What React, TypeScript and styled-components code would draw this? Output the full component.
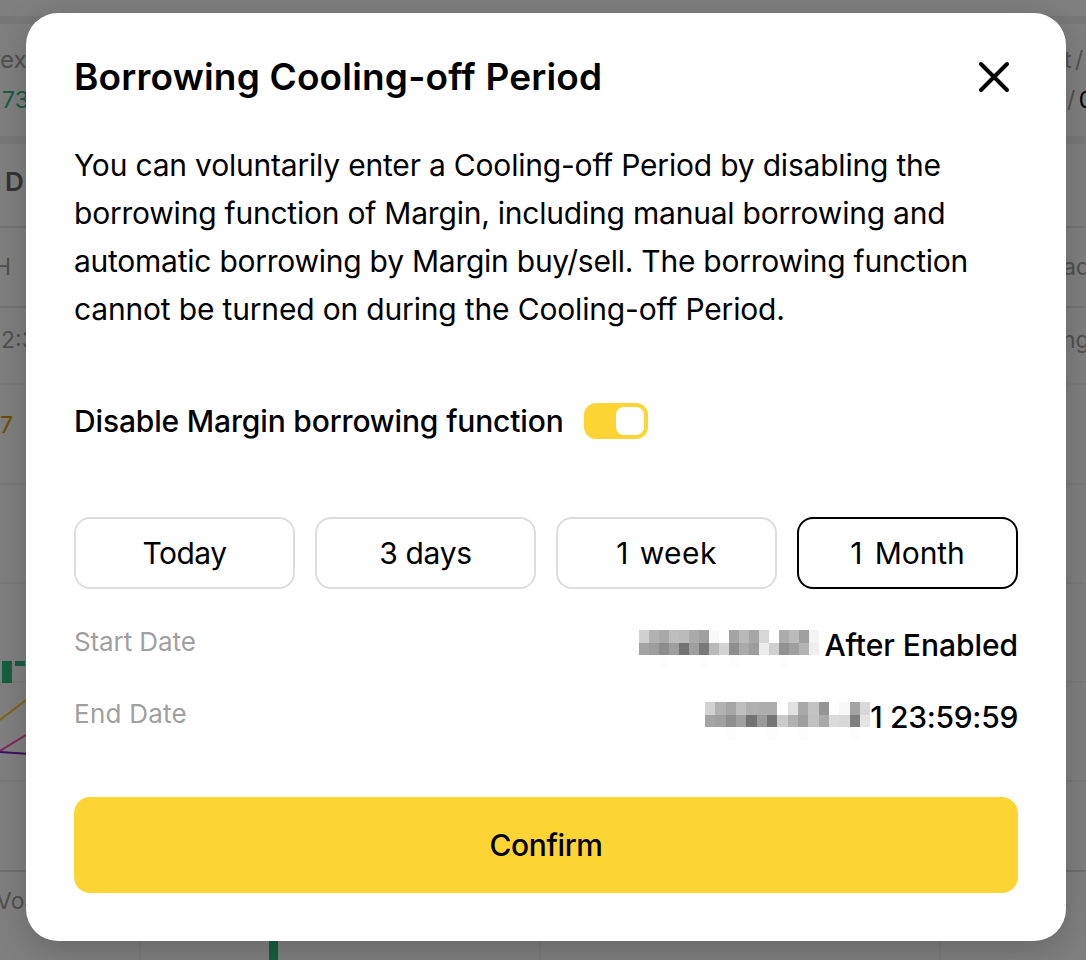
import React, { useState } from 'react';
import styled, { createGlobalStyle } from 'styled-components';

const GlobalStyle = createGlobalStyle`
  * {
    box-sizing: border-box;
  }

  body {
    margin: 0;
    background: #fff;
    font-family: Inter, 'Liberation Sans', sans-serif;
    overflow: hidden;
  }
`;

const Page = styled.div`
  position: relative;
  width: 1086px;
  height: 960px;
  overflow: hidden;
`;

const Trade = styled.div`
  display: flex;
  flex-direction: column;
  height: 960px;
`;

const Gap = styled.div`
  height: 8px;
  background: #f0f0f0;
`;

const Row = styled.div<{ $height: number; $line?: string; $lift?: number }>`
  display: flex;
  flex-direction: column;
  justify-content: center;
  height: ${({ $height }) => $height}px;
  padding-bottom: ${({ $lift }) => $lift ?? 0}px;
  border-bottom: ${({ $line }) => ($line ? `2px solid ${$line}` : 'none')};
`;

const Cells = styled.div`
  display: flex;
  justify-content: space-between;
  white-space: pre;
`;

const Cell = styled.div<{
  $color?: string;
  $size?: number;
  $weight?: number;
  $shift?: number;
  $width?: number;
}>`
  width: ${({ $width }) => ($width ? `${$width}px` : 'auto')};
  margin-left: ${({ $shift }) => $shift ?? 0}px;
  color: ${({ $color }) => $color ?? '#a0a0a0'};
  font-size: ${({ $size }) => $size ?? 23}px;
  font-weight: ${({ $weight }) => $weight ?? 400};
  line-height: 40px;
  word-spacing: -3px;
`;

const Dark = styled.span`
  color: #000;
`;

const Chart = styled.svg`
  display: block;
  flex: none;
`;

const Overlay = styled.div`
  position: absolute;
  inset: 0;
  padding: 13px 20px 0 26px;
  background: rgba(0, 0, 0, 0.5);
`;

const Modal = styled.section`
  display: flex;
  flex-direction: column;
  width: 1040px;
  height: 928px;
  padding: 40px 48px 48px;
  border-radius: 32px;
  background: #fff;
  box-shadow: 0 8px 32px rgba(0, 0, 0, 0.2);
  color: #000;
`;

const Header = styled.header`
  display: flex;
  align-items: center;
  justify-content: space-between;
  height: 48px;
`;

const Title = styled.h2`
  margin: 0;
  font-size: 37px;
  font-weight: 600;
  line-height: 48px;
  letter-spacing: 0.18px;
`;

const CloseButton = styled.button`
  display: flex;
  width: 48px;
  height: 48px;
  padding: 0;
  border: none;
  background: none;
  cursor: pointer;
`;

const Description = styled.p`
  margin: 40px 0 0;
  font-size: 30px;
  line-height: 48px;
  white-space: nowrap;
`;

const TextLine = styled.span<{ $spacing: number }>`
  display: block;
  letter-spacing: ${({ $spacing }) => $spacing}px;
`;

const SwitchRow = styled.div`
  display: flex;
  align-items: center;
  gap: 20px;
  height: 48px;
  margin-top: 64px;
`;

const SwitchLabel = styled.div`
  width: 490px;
  font-size: 30px;
  font-weight: 500;
  letter-spacing: -0.16px;
  white-space: nowrap;
`;

const Switch = styled.button<{ $on: boolean }>`
  display: flex;
  justify-content: ${({ $on }) => ($on ? 'flex-end' : 'flex-start')};
  width: 64px;
  height: 36px;
  padding: 4px;
  border: none;
  border-radius: 12px;
  background: ${({ $on }) => ($on ? '#fcd535' : '#ddd')};
  cursor: pointer;
`;

const Knob = styled.span`
  width: 28px;
  height: 28px;
  border-radius: 8px;
  background: #fff;
`;

const Periods = styled.div`
  display: grid;
  grid-template-columns: repeat(4, 221px);
  gap: 20px;
  margin-top: 72px;
`;

const PeriodButton = styled.button<{
  $active: boolean;
  $spacing: number;
  $wordSpacing: number;
}>`
  height: 72px;
  padding: 0;
  border: 2px solid ${({ $active }) => ($active ? '#000' : '#ddd')};
  border-radius: 16px;
  background: #fff;
  color: #000;
  font-family: inherit;
  font-size: 30px;
  letter-spacing: ${({ $spacing }) => $spacing}px;
  word-spacing: ${({ $wordSpacing }) => $wordSpacing}px;
  cursor: pointer;
`;

const Dates = styled.div`
  display: flex;
  flex-direction: column;
  gap: 24px;
  margin-top: 31px;
`;

const DateRow = styled.div`
  display: flex;
  justify-content: space-between;
  height: 48px;
`;

const DateLabel = styled.div<{ $spacing: number }>`
  color: #a0a0a0;
  font-size: 26px;
  line-height: 44px;
  letter-spacing: ${({ $spacing }) => $spacing}px;
`;

const DateValue = styled.div<{ $gap: number; $spacing: number }>`
  display: flex;
  gap: ${({ $gap }) => $gap}px;
  font-size: 30px;
  font-weight: 500;
  line-height: 50px;
  letter-spacing: ${({ $spacing }) => $spacing}px;
  white-space: pre;
`;

const Mosaic = styled.div<{ $columns: number; $width: number }>`
  display: grid;
  grid-template-columns: repeat(${({ $columns }) => $columns}, 1fr);
  grid-template-rows: 13px 12px 13px;
  width: ${({ $width }) => $width}px;
  height: 38px;
  margin-top: 10px;
`;

const Pixel = styled.i<{ $shade: string }>`
  background: #${({ $shade }) => $shade};
`;

const ConfirmButton = styled.button`
  height: 96px;
  margin-top: 57px;
  padding: 0;
  border: none;
  border-radius: 16px;
  background: #fcd535;
  color: #000;
  font-family: inherit;
  font-size: 30px;
  font-weight: 500;
  letter-spacing: -0.4px;
  cursor: pointer;
`;

const lines = [
  { text: 'You can voluntarily enter a Cooling-off Period by disabling the', spacing: -0.2 },
  { text: 'borrowing function of Margin, including manual borrowing and', spacing: -0.22 },
  { text: 'automatic borrowing by Margin buy/sell. The borrowing function', spacing: -0.25 },
  { text: 'cannot be turned on during the Cooling-off Period.', spacing: -0.17 },
];

const periods = [
  { label: 'Today', spacing: -0.5, wordSpacing: 0 },
  { label: '3 days', spacing: -0.3, wordSpacing: 0 },
  { label: '1 week', spacing: 0.4, wordSpacing: 2 },
  { label: '1 Month', spacing: -0.1, wordSpacing: 4 },
];

const startShades = [
  'd0d0d0 b2b2b2 a8a8a8 bebebe bbbbbb aaaaaa a0a0a0 f9f9f9 fefefe a4a4a4 b9b9b9 a6a6a6 d7d7d7 ffffff adadad bbbbbb 9f9f9f f4f4f4',
  'a4a4a4 9d9d9d 8c8c8c 9e9e9e 737373 9f9f9f 797979 b9b9b9 d3d3d3 8e8e8e aaaaaa 9d9d9d ececec d0d0d0 929292 9f9f9f b3b3b3 efefef',
  'ffffff ffffff fdfdfd ffffff ffffff ffffff fdfdfd ffffff ffffff fdfdfd ffffff ffffff ffffff ffffff fdfdfd ffffff ffffff ffffff',
];

const endShades = [
  'd1d1d1 b2b2b2 a5a5a5 bfbfbf b0b0b0 aeaeae adadad ffffff e1e1e1 a9a9a9 c3c3c3 949494 ffffff f8f8f8 a3a3a3 d8d8d8',
  'a5a5a5 a0a0a0 8f8f8f a0a0a0 737373 9a9a9a 757575 cacaca b1b1b1 9e9e9e c1c1c1 a9a9a9 dadada d8d8d8 808080 e4e4e4',
  'ffffff ffffff fdfdfd ffffff ffffff ffffff fdfdfd ffffff ffffff fdfdfd ffffff ffffff ffffff ffffff fdfdfd ffffff',
];

const MaskedDate = ({ shades, width }: { shades: string[]; width: number }) => {
  const pixels = shades.join(' ').split(' ');
  return (
    <Mosaic $columns={pixels.length / shades.length} $width={width}>
      {pixels.map((shade, i) => (
        <Pixel key={i} $shade={shade} />
      ))}
    </Mosaic>
  );
};

const TradePage = () => (
  <Trade>
    <Row $height={16} />
    <Gap />
    <Row $height={112}>
      <Cells>
        <Cell $size={24}>ex</Cell>
        <Cell $width={22}>t /</Cell>
      </Cells>
      <Cells>
        <Cell $color="#2ebd85" $shift={2}>
          73
        </Cell>
        <Cell $width={19}>
          /<Dark> 0</Dark>
        </Cell>
      </Cells>
    </Row>
    <Gap />
    <Row $height={84} $line="#e8e8e8" $lift={6}>
      <Cells>
        <Cell $color="#666" $size={26} $weight={600} $shift={5}>
          D
        </Cell>
      </Cells>
    </Row>
    <Row $height={80} $line="#e8e8e8">
      <Cells>
        <Cell $shift={-6}>H</Cell>
        <Cell $width={23}>ad</Cell>
      </Cells>
    </Row>
    <Row $height={77} $line="#f6f6f6" $lift={11}>
      <Cells>
        <Cell $shift={1}>2:3</Cell>
        <Cell $width={24}>ng</Cell>
      </Cells>
    </Row>
    <Row $height={79}>
      <Cells>
        <Cell $color="#d99a00">7</Cell>
      </Cells>
    </Row>
    <Chart width="1086" height="406" viewBox="0 464 1086 406">
      <g stroke="#f4f4f4" strokeWidth="2">
        <path d="M0 484H1086M0 583H1086M0 682H1086M0 781H1086" />
      </g>
      <g fill="#2ebd85">
        <rect x="2" y="661" width="10" height="22" />
        <rect x="15" y="661" width="10" height="5" />
      </g>
      <g fill="none" strokeWidth="2">
        <path d="M0 720L30 697" stroke="#ffc62e" />
        <path d="M0 751L30 732.5" stroke="#ff4cb8" />
        <path d="M0 752L30 754" stroke="#7a1fd0" />
      </g>
    </Chart>
    <Row $height={2} $line="#dedede" />
    <Row $height={58}>
      <Cells>
        <Cell $shift={-4}>Vo</Cell>
      </Cells>
    </Row>
    <Chart width="1086" height="30" viewBox="0 930 1086 30">
      <path d="M140 930V960M540 930V960M940 930V960" stroke="#f4f4f4" strokeWidth="2" />
      <rect x="269" y="930" width="9" height="30" fill="#2ebd85" />
    </Chart>
  </Trade>
);

const App = () => {
  const [enabled, setEnabled] = useState(true);
  const [period, setPeriod] = useState('1 Month');

  return (
    <Page>
      <GlobalStyle />
      <TradePage />
      <Overlay>
        <Modal>
          <Header>
            <Title>Borrowing Cooling-off Period</Title>
            <CloseButton type="button" aria-label="Close">
              <svg width="48" height="48" viewBox="0 0 48 48">
                <path
                  d="M11 11L37 37M37 11L11 37"
                  stroke="#000"
                  strokeWidth="4"
                  strokeLinecap="round"
                />
              </svg>
            </CloseButton>
          </Header>
          <Description>
            {lines.map(({ text, spacing }) => (
              <TextLine key={text} $spacing={spacing}>
                {text}
              </TextLine>
            ))}
          </Description>
          <SwitchRow>
            <SwitchLabel>Disable Margin borrowing function</SwitchLabel>
            <Switch type="button" $on={enabled} onClick={() => setEnabled(!enabled)}>
              <Knob />
            </Switch>
          </SwitchRow>
          <Periods>
            {periods.map(({ label, spacing, wordSpacing }) => (
              <PeriodButton
                key={label}
                type="button"
                $active={label === period}
                $spacing={spacing}
                $wordSpacing={wordSpacing}
                onClick={() => setPeriod(label)}
              >
                {label}
              </PeriodButton>
            ))}
          </Periods>
          <Dates>
            <DateRow>
              <DateLabel $spacing={-0.1}>Start Date</DateLabel>
              <DateValue $gap={5} $spacing={-0.04}>
                <MaskedDate shades={startShades} width={180} />
                After Enabled
              </DateValue>
            </DateRow>
            <DateRow>
              <DateLabel $spacing={0.25}>End Date</DateLabel>
              <DateValue $gap={0} $spacing={-0.3}>
                <MaskedDate shades={endShades} width={165} />1 23:59:59
              </DateValue>
            </DateRow>
          </Dates>
          <ConfirmButton type="button">Confirm</ConfirmButton>
        </Modal>
      </Overlay>
    </Page>
  );
};

export default App;
